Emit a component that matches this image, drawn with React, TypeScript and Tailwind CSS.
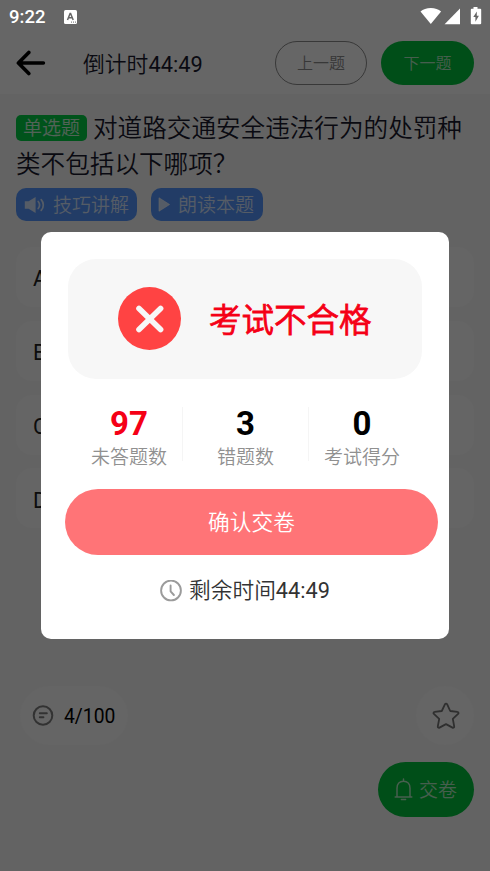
import React from 'react';

const OPTIONS = ['A', 'B', 'C', 'D'];

const BackIcon: React.FC = () => (
  <svg className="h-[26px] w-[30px] shrink-0 text-black" viewBox="0 0 30 26" fill="none" stroke="currentColor" strokeWidth={3.6} strokeLinecap="round" strokeLinejoin="round">
    <path d="M27.4 13H2.6M12.8 2.4L2.4 13l10.4 10.5" />
  </svg>
);

const SpeakerIcon: React.FC = () => (
  <svg className="h-[18px] w-[22px] shrink-0" viewBox="0 0 22 18" fill="none">
    <path d="M.8 5.2h3.8L11.6 1v16l-7-4.2H.8z" fill="currentColor" />
    <path d="M14.2 5.5c1.6 2 1.6 5 0 7M17.2 3.6c2.8 3 2.8 7.8 0 10.8" stroke="currentColor" strokeWidth={1.7} strokeLinecap="round" />
  </svg>
);

const PlayIcon: React.FC = () => (
  <svg className="h-[15px] w-[12px] shrink-0" viewBox="0 0 12 15" fill="currentColor">
    <path d="M1 .8v13.4l10.6-6.7z" stroke="currentColor" strokeWidth={0.8} strokeLinejoin="round" />
  </svg>
);

const ListIcon: React.FC = () => (
  <svg className="h-[22px] w-[22px] shrink-0 text-[#7d7d7d]" viewBox="0 0 22 22" fill="none" stroke="currentColor" strokeWidth={2} strokeLinecap="round">
    <circle cx="11" cy="10.5" r="9.3" />
    <path d="M7.8 8.2h7M7.8 12.2h3.6" />
  </svg>
);

const StarIcon: React.FC = () => (
  <svg className="h-7 w-7 text-[#757575]" viewBox="0 0 28 28" fill="none" stroke="currentColor" strokeWidth={1.8} strokeLinejoin="round">
    <path d="M12.9 2.4a1.3 1.3 0 0 1 2.3 0l3 6.6 7.2.9c1.1.1 1.5 1.3.7 2l-5.3 5 1.4 7.4c.2 1.1-.8 1.8-1.7 1.3L14 22.1l-6.5 3.5c-.9.5-1.9-.2-1.7-1.3l1.4-7.4-5.3-5c-.8-.7-.4-1.9.7-2l7.2-.9z" />
  </svg>
);

const BellIcon: React.FC = () => (
  <svg className="h-[23px] w-[19px] shrink-0" viewBox="0 0 19 23" fill="none" stroke="currentColor" strokeWidth={1.5} strokeLinecap="round" strokeLinejoin="round">
    <path d="M9.5 1v2M1.2 19h16.6M3 19v-8.8C3 6 5.6 3.2 9.5 3.2S16 6 16 10.2V19M7.4 21.6h4.2" />
  </svg>
);

const ClockIcon: React.FC = () => (
  <svg className="h-[22px] w-[22px] shrink-0 text-[#9b9b9b]" viewBox="0 0 22 22" fill="none" stroke="currentColor" strokeWidth={1.9} strokeLinecap="round" strokeLinejoin="round">
    <circle cx="11" cy="10.5" r="9.9" />
    <path d="M10.6 5.4v5.9l3.3 3.7" />
  </svg>
);

const FailIcon: React.FC = () => (
  <svg className="-mt-px h-[63px] w-[63px] shrink-0" viewBox="0 0 63 63" fill="none">
    <circle cx="31.5" cy="31.5" r="31.5" fill="#ff4343" />
    <path d="M21 21.4l21.6 21.2M42.6 21.4L21 42.6" stroke="#f7f7f7" strokeWidth={5.6} strokeLinecap="round" />
  </svg>
);

const StatusBar: React.FC = () => (
  <div className="flex h-[33px] items-center pl-[9px] pr-2 text-white">
    <span className="w-[55px] pt-px text-[18.5px] font-medium leading-none">9:22</span>
    <svg className="h-[14px] w-[13px]" viewBox="0 0 13 14">
      <rect width="13" height="14" rx="1.5" fill="#fff" />
      <path d="M3.5 10L6.1 3.5h.5L9.2 10M4.6 7.7h3.6" fill="none" stroke="#666" strokeWidth={1.5} />
      <path d="M7 12.1h1M9 12.1h1M11 12.1h1" stroke="#666" strokeWidth={1} />
    </svg>
    <div className="ml-auto flex items-center">
      <svg className="-mt-px h-[18px] w-[62px]" viewBox="0 0 62 18" fill="#fff">
        <path d="M10.8 17L.5 4.5C3 2.4 6.6 1 10.8 1s7.8 1.4 10.3 3.5z" />
        <path d="M40 1.6V17.2H24.6z" />
        <path fillRule="evenodd" d="M53.5 0h4v1.7h2.8c.5 0 .9.4.9.9v13.7c0 .5-.4.9-.9.9h-8.6a.9.9 0 0 1-.9-.9V2.6c0-.5.4-.9.9-.9h1.8zM56.8 4.6l-3.5 5.5h2.1v4.6l3.5-5.9h-2.1z" />
      </svg>
    </div>
  </div>
);

const QuizPage: React.FC = () => (
  <div className="flex h-[871px] flex-col bg-[#f8f8f8]">
    <header className="flex h-[94px] items-center bg-white pl-4 pr-4 pt-[32px]">
      <BackIcon />
      <h1 className="ml-[37px] pt-[3px] text-[21.8px] font-normal leading-none text-[#1a1a2e]">倒计时44:49</h1>
      <div className="ml-auto flex gap-[14px] text-base leading-none">
        <button className="h-11 w-[92px] rounded-full border-[1.5px] border-[#8c8c8c] pt-[2px] text-[#8c8c8c]">上一题</button>
        <button className="h-11 w-[93px] rounded-full bg-[#00c33c] pt-[2px] text-white/70">下一题</button>
      </div>
    </header>

    <section className="h-[153px] px-4 pt-[17px]">
      <p className="whitespace-nowrap text-[24.6px] leading-9 text-[#1a1a2e]">
        <span className="mr-[6px] inline-flex h-[26px] w-[71px] items-center justify-center rounded-[5px] bg-[#00cf45] pt-[2px] align-[2px] text-[19px] leading-none text-white/80">单选题</span>
        对道路交通安全违法行为的处罚种
        <br />
        类不包括以下哪项？
      </p>
      <div className="mt-[5px] flex gap-[14px] text-[19px] leading-none text-white/75">
        <button className="flex h-[33px] w-[121px] items-center gap-[7px] rounded-[10px] bg-[#5597ff] pl-2">
          <SpeakerIcon /><span className="pt-[2px]">技巧讲解</span>
        </button>
        <button className="flex h-[33px] w-[112px] items-center gap-2 rounded-[10px] bg-[#5597ff] pl-[7px]">
          <PlayIcon /><span className="pt-[2px]">朗读本题</span>
        </button>
      </div>
    </section>

    <ul className="flex flex-col gap-[13.8px] px-4">
      {OPTIONS.map((option) => (
        <li key={option} className="flex h-[60px] items-center rounded-[16px] bg-[#fcfcfc] pl-[17px] pt-[5px] text-[21.5px] text-[#222]">
          {option}
        </li>
      ))}
    </ul>

    <footer className="mt-auto flex flex-col items-end px-4 pb-[54px]">
      <div className="flex w-full items-center justify-between pl-1">
        <div className="flex h-[59px] w-[108px] items-center gap-[10px] rounded-full bg-[#fcfcfc] pl-3 text-[19.3px] text-black">
          <ListIcon /><span className="pt-[3px]">4/100</span>
        </div>
        <div className="flex h-[59px] w-[58px] items-center justify-center rounded-full bg-[#fcfcfc] pl-[2px]">
          <StarIcon />
        </div>
      </div>
      <button className="mt-[17px] flex h-[55px] w-24 items-center gap-[6px] rounded-full bg-[#00c33c] pl-4 text-[19px] leading-none text-white/70">
        <BellIcon /><span className="pt-[2px]">交卷</span>
      </button>
    </footer>
  </div>
);

interface StatProps {
  value: number;
  label: string;
  danger?: boolean;
}

const Stat: React.FC<StatProps> = ({ value, label, danger }) => (
  <div className={danger ? 'flex flex-1 flex-col items-center pl-px' : 'flex flex-1 flex-col items-center'}>
    <span className={danger ? 'text-[33px] font-bold leading-[33px] text-[#f50016]' : 'text-[33px] font-bold leading-[33px] text-black'}>
      {value}
    </span>
    <span className="mt-[8px] text-[19px] font-light leading-[20px] text-[#909090]">{label}</span>
  </div>
);

const ResultDialog: React.FC = () => (
  <div className="flex h-[407px] w-[408px] flex-col rounded-[10px] bg-white pt-[27px]">
    <div className="mx-[27px] flex h-[120px] items-center rounded-[28px] bg-[#f7f7f7] pl-[50px]">
      <FailIcon />
      <h2 className="ml-7 pt-[4px] text-[32.5px] font-normal leading-none text-[#f50016] [-webkit-text-stroke:0.8px_#f50016]">考试不合格</h2>
    </div>
    <div className="mx-[34px] mt-[28px] flex h-[54px]">
      <Stat value={97} label="未答题数" danger />
      <div className="w-px bg-[#f5f5f5]" />
      <div className="flex w-[125px]">
        <Stat value={3} label="错题数" />
      </div>
      <div className="w-px bg-[#f5f5f5]" />
      <Stat value={0} label="考试得分" />
    </div>
    <button className="ml-6 mt-7 h-[66px] w-[373px] rounded-full bg-[#ff7477] pt-[2px] text-[21.7px] leading-none text-white">确认交卷</button>
    <div className="mt-[23px] flex items-center justify-center gap-[7px] text-[21.7px] leading-6 text-[#333]">
      <ClockIcon /><span className="pt-px">剩余时间44:49</span>
    </div>
  </div>
);

export default function App() {
  return (
    <div className="relative h-[871px] w-[490px] overflow-hidden font-['Roboto','Noto_Sans_CJK_SC_DemiLight','Noto_Sans_CJK_SC',sans-serif]">
      <QuizPage />
      <div className="absolute inset-0 flex flex-col bg-black/60">
        <StatusBar />
        <div className="mt-[199px] flex justify-center">
          <ResultDialog />
        </div>
      </div>
    </div>
  );
}
